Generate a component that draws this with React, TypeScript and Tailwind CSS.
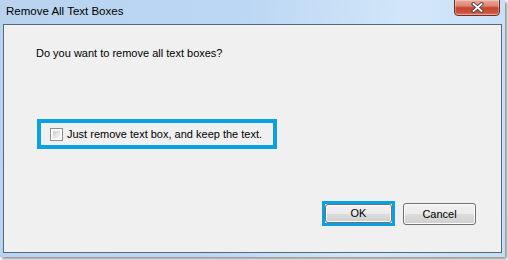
import React from "react";

const font = { fontFamily: '"Liberation Sans", Arial, sans-serif' };

function CloseButton() {
  return (
    <div className="relative -mt-px flex h-[17px] w-[46px] items-center justify-center rounded-b-[4px] border border-[#6b3129] bg-[linear-gradient(to_bottom,#eaa99b_0%,#dc8472_40%,#c7442e_52%,#cf523c_85%,#e08a78_100%)] shadow-[inset_0_0_0_1px_rgba(255,255,255,0.3)]">
      <svg width="13" height="11" viewBox="0 0 13 11">
        <path
          d="M2.5 2 L10.5 9 M10.5 2 L2.5 9"
          stroke="#4a4042"
          strokeWidth="3.6"
          strokeLinecap="square"
        />
        <path
          d="M2.5 2 L10.5 9 M10.5 2 L2.5 9"
          stroke="#ffffff"
          strokeWidth="1.8"
          strokeLinecap="square"
        />
      </svg>
    </div>
  );
}

function Checkbox() {
  return (
    <span className="inline-flex h-[13px] w-[13px] items-center justify-center border border-[#8e8f8f] bg-white">
      <span className="h-[9px] w-[9px] border border-[#f4f4f4] bg-[linear-gradient(135deg,#cfcfcf,#f7f7f7)]" />
    </span>
  );
}

function Button({ label }: { label: string }) {
  return (
    <div className="flex h-full w-full items-center justify-center rounded-[3px] border border-[#707070] bg-[linear-gradient(to_bottom,#f2f2f2_0%,#ebebeb_50%,#dddddd_51%,#cfcfcf_100%)] text-[11px] text-black shadow-[inset_0_0_0_1px_#fcfcfc]">
      {label}
    </div>
  );
}

export default function App() {
  return (
    <div className="h-[260px] w-[508px] overflow-hidden bg-white" style={font}>
      <div className="flex h-[257px] w-[505px] flex-col bg-[linear-gradient(100deg,#b9d3ef_0%,#bcd7f4_45%,#d3e6f9_75%,#c6ddf5_100%)] px-[3px] pb-[4px] shadow-[2px_2px_3px_rgba(0,0,0,0.45)]">
        {/* title bar */}
        <div className="flex h-[24px] items-start justify-between">
          <span className="pl-[3px] pt-[4px] text-[11.5px] leading-[14px] text-black">
            Remove All Text Boxes
          </span>
          <div className="mr-[2px]">
            <CloseButton />
          </div>
        </div>

        {/* client area */}
        <div className="flex flex-1 flex-col border border-[#55687c] bg-[#f0f0f0]">
          <div className="pl-[32px] pt-[22px] text-[11px] leading-[13px] text-black">
            Do you want to remove all text boxes?
          </div>

          <div className="ml-[33px] mt-[59px] flex h-[30px] w-[240px] items-center gap-[4px] border-[4px] border-[#0aa1e4] pl-[9px]">
            <Checkbox />
            <span className="text-[11px] leading-[13px] text-black">
              Just remove text box, and keep the text.
            </span>
          </div>

          <div className="mt-[52px] flex items-start justify-end gap-[8px] pr-[25px]">
            <div className="h-[25px] w-[73px] border-[3px] border-[#0aa1e4]">
              <Button label="OK" />
            </div>
            <div className="mt-[2px] h-[22px] w-[73px]">
              <Button label="Cancel" />
            </div>
          </div>
        </div>
      </div>
    </div>
  );
}
